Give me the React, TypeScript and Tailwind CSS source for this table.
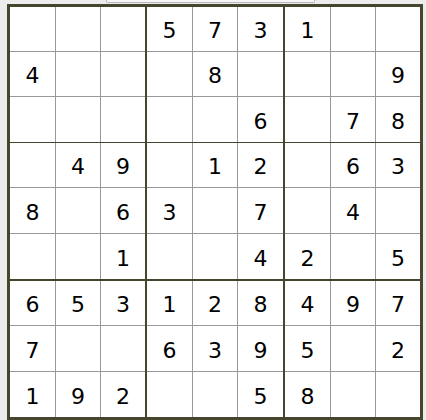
import React from "react";

const grid: string[] = [
  "   5731  ",
  "4   8   9",
  "     6 78",
  " 49 12 63",
  "8 63 7 4 ",
  "  1  42 5",
  "653128497",
  "7  6395 2",
  "192  58  ",
];

const colW = [
  ["w-[45px]", "w-[44px]", "w-[44px]"],
  ["w-[45px]", "w-[44px]", "w-[45px]"],
  ["w-[45px]", "w-[44px]", "w-[44px]"],
];
const rowH = [
  ["h-[44px]", "h-[44px]", "h-[45px]"],
  ["h-[44px]", "h-[45px]", "h-[45px]"],
  ["h-[44px]", "h-[45px]", "h-[45px]"],
];

function Box({ br, bc }: { br: number; bc: number }) {
  return (
    <div className="flex flex-col gap-px bg-[#999999]">
      {[0, 1, 2].map((r) => (
        <div key={r} className="flex gap-px">
          {[0, 1, 2].map((c) => {
            const ch = grid[br * 3 + r][bc * 3 + c];
            return (
              <div
                key={c}
                className={`${colW[bc][c]} ${rowH[br][r]} bg-white flex items-center justify-center pt-[4px] text-[22px] leading-none text-black`}
              >
                {ch.trim()}
              </div>
            );
          })}
        </div>
      ))}
    </div>
  );
}

export default function App() {
  return (
    <div
      className="w-[426px] h-[420px] bg-[#ececec] overflow-hidden"
      style={{ fontFamily: '"DejaVu Sans", Verdana, sans-serif' }}
    >
      <div className="h-[4px] flex">
        <div className="ml-[106px] w-[209px] h-[3px] bg-[#f6f6f6] border-l border-r border-b border-[#b8b8b8] rounded-b-[2px]" />
      </div>
      <div className="ml-[7px] w-fit border-[3px] border-[#46462f] bg-[#46462f] flex flex-col">
        {[0, 1, 2].map((br) => (
          <div
            key={br}
            className={`flex gap-[2px] ${br === 1 ? "mt-px" : br === 2 ? "mt-[2px]" : ""}`}
          >
            {[0, 1, 2].map((bc) => (
              <Box key={bc} br={br} bc={bc} />
            ))}
          </div>
        ))}
      </div>
    </div>
  );
}
